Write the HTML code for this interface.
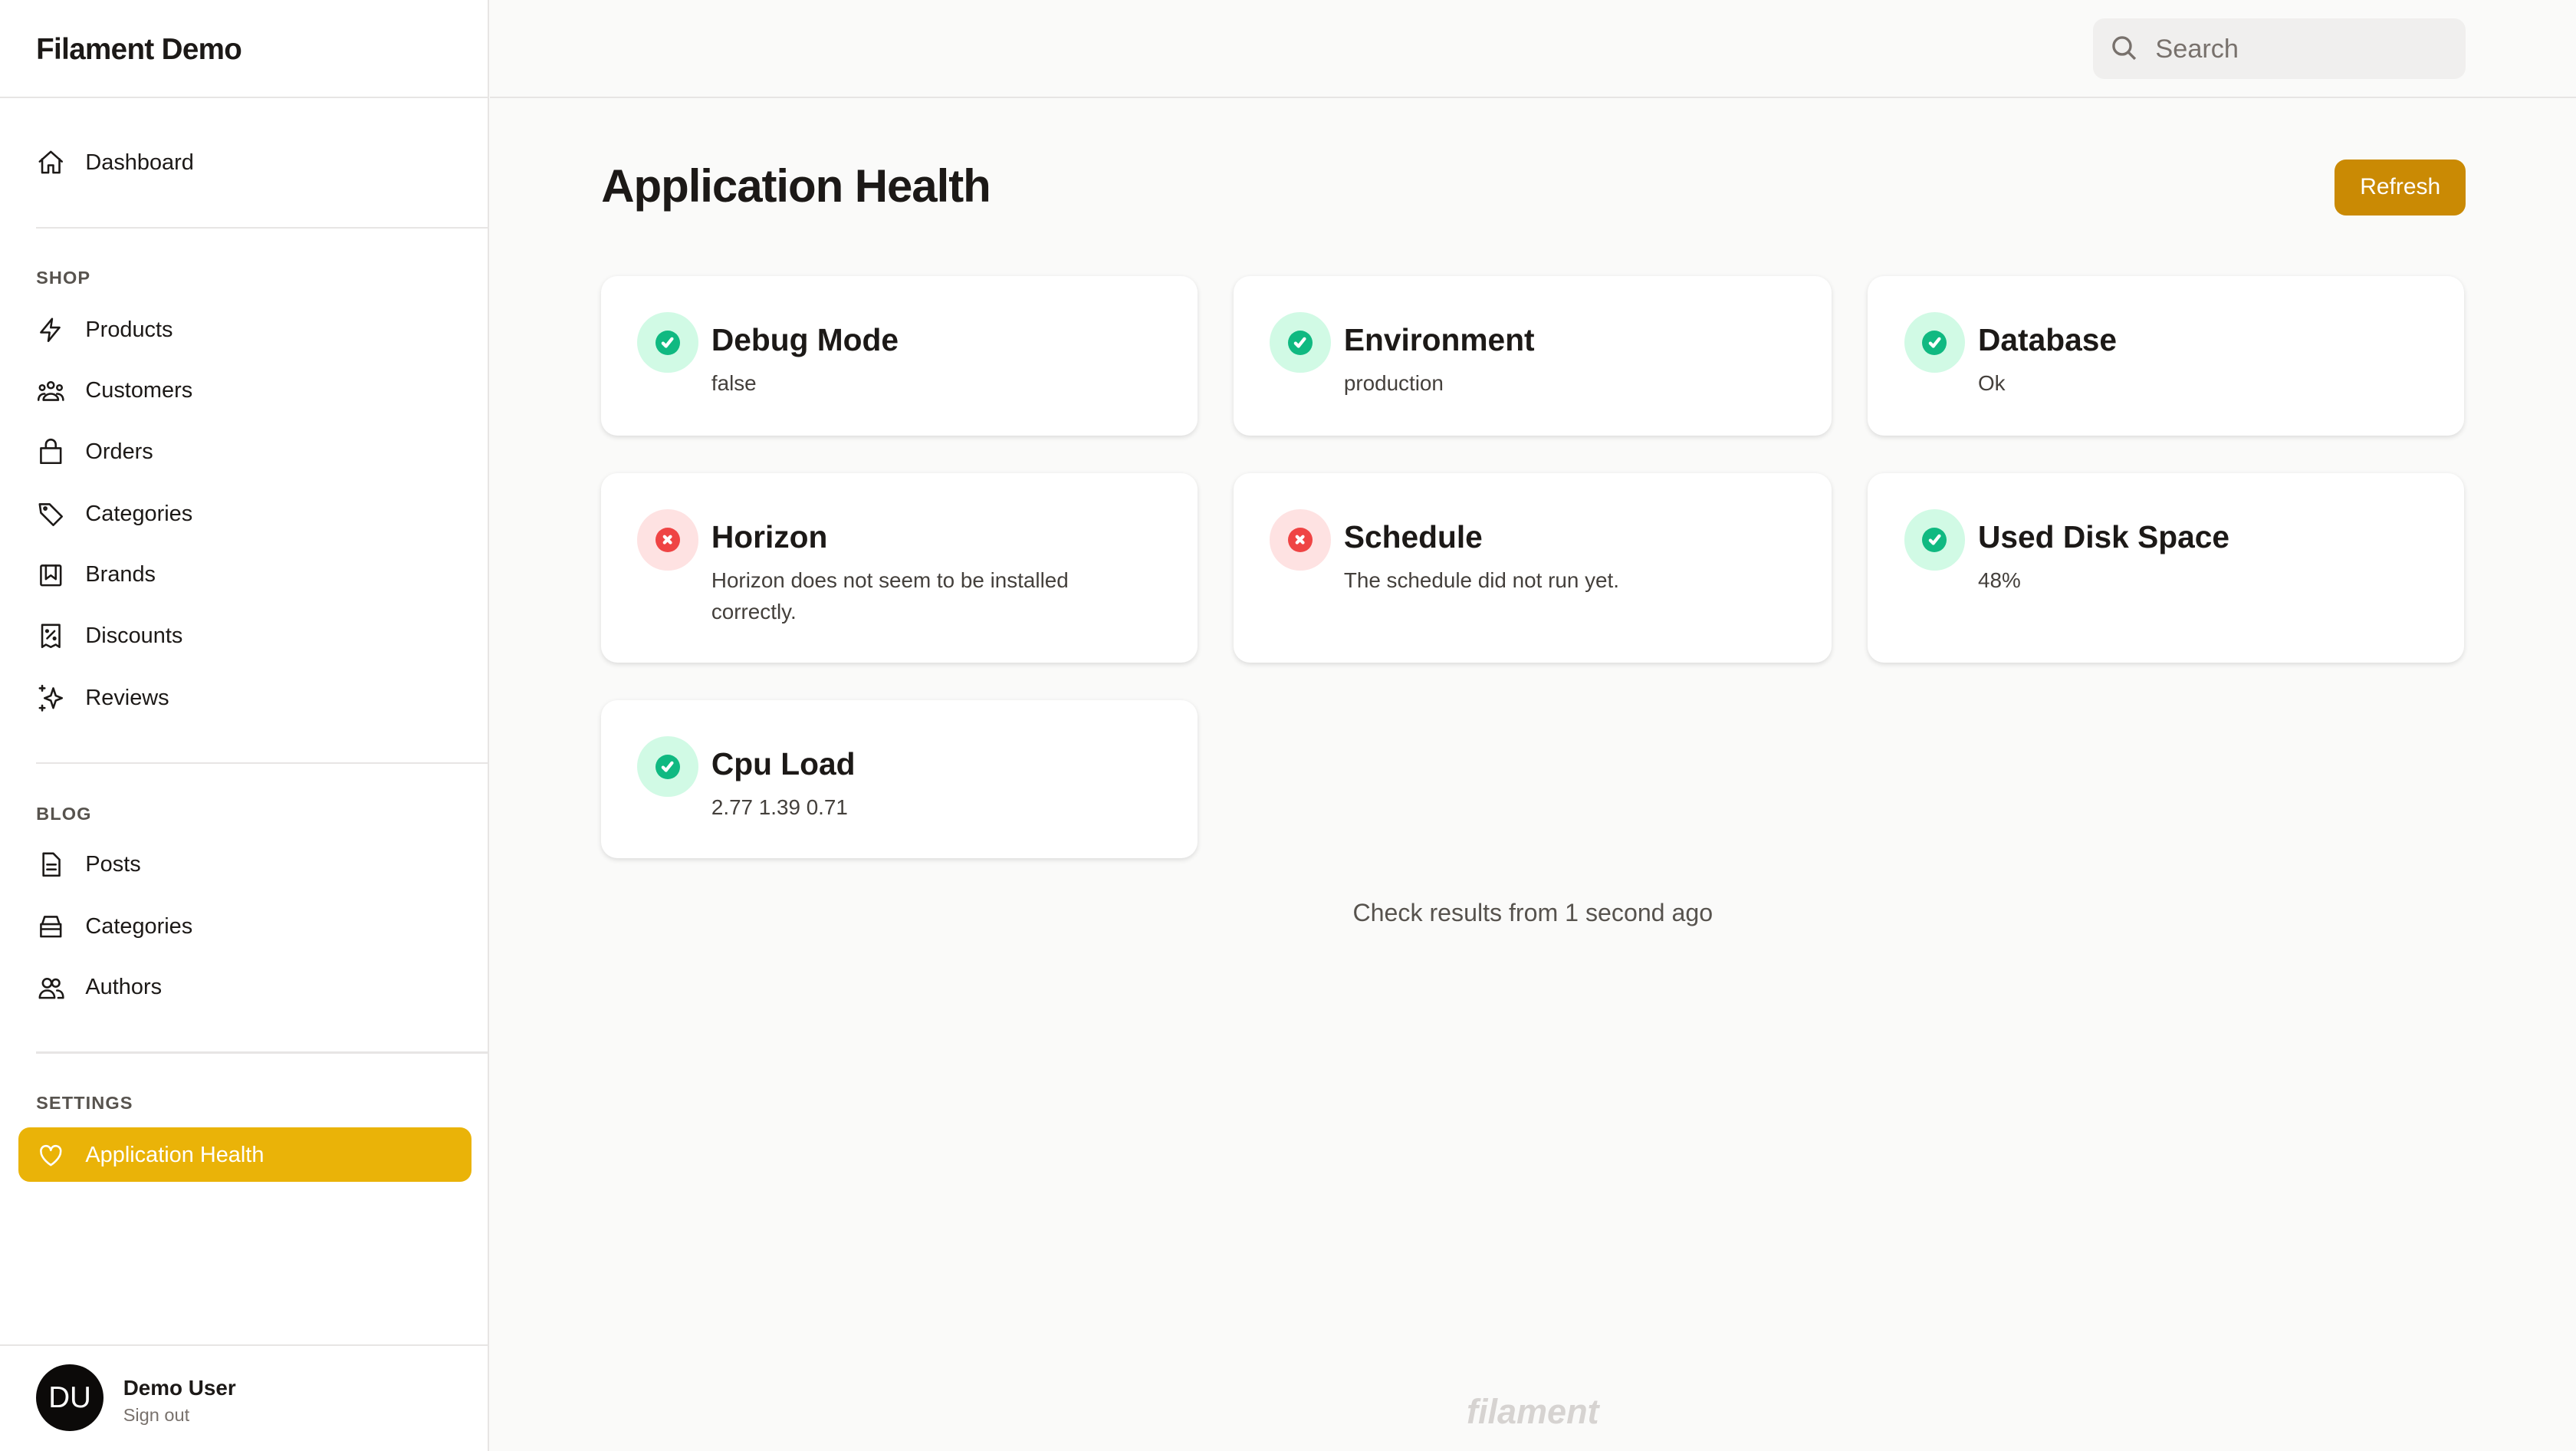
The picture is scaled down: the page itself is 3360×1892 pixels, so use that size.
<!DOCTYPE html>
<html><head><meta charset="utf-8"><style>
html,body{margin:0;padding:0;}
body{width:1568px;height:883px;zoom:2.142857;background:#fafaf9;font-family:"Liberation Sans",sans-serif;color:#1c1917;overflow:hidden;position:relative;}
.side{position:absolute;left:0;top:0;width:297px;height:883px;background:#fff;border-right:1px solid #e7e5e4;}
.brand{height:59px;border-bottom:1px solid #e7e5e4;font-size:18px;font-weight:bold;line-height:61px;padding-left:22px;letter-spacing:-0.3px;}
.item{position:absolute;left:22px;font-size:13.5px;display:flex;align-items:center;height:20px;}
.item svg{width:18px;height:18px;margin-right:12px;fill:none;stroke:#1c1917;stroke-width:1.6;stroke-linecap:round;stroke-linejoin:round;}
.grp{position:absolute;left:22px;font-size:11px;font-weight:bold;color:#57534e;letter-spacing:0.5px;}
.hr{position:absolute;left:22px;right:0;height:1px;background:#e7e5e4;}
.active{position:absolute;left:11px;top:686px;width:276px;height:33px;background:#eab308;border-radius:7px;}
.top{position:absolute;left:298px;right:0;top:0;height:59px;border-bottom:1px solid #e7e5e4;}
.search{position:absolute;left:1274px;top:11px;width:227px;height:37px;background:#f0efee;border-radius:7px;}
h1{position:absolute;left:366px;top:97px;margin:0;font-size:28px;font-weight:bold;letter-spacing:-0.5px;}
.btn{position:absolute;left:1421px;top:97px;width:80px;height:34px;background:#ca8a04;border-radius:7px;color:#fff;font-size:14px;text-align:center;line-height:34px;}
.card{position:absolute;background:#fff;border-radius:10px;box-shadow:0 1px 3px rgba(0,0,0,.12);width:363px;}
.ic{position:absolute;left:22px;top:22px;width:37px;height:37px;border-radius:50%;}
.ic.g{background:#d1fae5}.ic.r{background:#fee2e2}
.ic i{position:absolute;left:11px;top:11px;width:15px;height:15px;border-radius:50%;}
.g i{background:#10b981}.r i{background:#ef4444}
.ic svg{position:absolute;left:14px;top:14px;width:9px;height:9px;stroke:#fff;stroke-width:2.2;fill:none;stroke-linecap:round;stroke-linejoin:round;}
.t{position:absolute;left:67px;top:28px;font-size:19px;font-weight:bold;}
.d{position:absolute;left:67px;top:56px;font-size:13px;color:#44403c;line-height:19px;width:270px;}
</style></head><body>
<div class="side">
<div class="brand">Filament Demo</div>
<div class="item" style="top:89px"><svg viewBox="0 0 24 24"><path d="M3 11l9-8 9 8M5 9v11h5v-6h4v6h5V9"/></svg>Dashboard</div>
<div class="hr" style="top:138px"></div>
<div class="grp" style="top:163px">SHOP</div>
<div class="item" style="top:191px"><svg viewBox="0 0 24 24"><path d="M13 3L4 14h7l-1 7 9-11h-7z"/></svg>Products</div>
<div class="item" style="top:228px"><svg viewBox="0 0 24 24"><circle cx="12" cy="7" r="2.5"/><circle cx="5" cy="9" r="2"/><circle cx="19" cy="9" r="2"/><path d="M2 19c0-3 2-5 5-5M22 19c0-3-2-5-5-5M6 19c0-3 3-5 6-5s6 2 6 5z"/></svg>Customers</div>
<div class="item" style="top:265px"><svg viewBox="0 0 24 24"><path d="M8 9V6a4 4 0 018 0v3M4 9h16v12H4z"/></svg>Orders</div>
<div class="item" style="top:303px"><svg viewBox="0 0 24 24"><path d="M3 4h8l10 10-7 7L4 11z"/><circle cx="7.5" cy="7.5" r="1"/></svg>Categories</div>
<div class="item" style="top:340px"><svg viewBox="0 0 24 24"><rect x="4" y="4" width="16" height="16" rx="1"/><path d="M8 4v11l4-3 4 3V4"/></svg>Brands</div>
<div class="item" style="top:377px"><svg viewBox="0 0 24 24"><path d="M5 3h14v18l-3-2-4 2-4-2-3 2zM9 14l6-6"/><circle cx="9" cy="8" r=".8"/><circle cx="15" cy="14" r=".8"/></svg>Discounts</div>
<div class="item" style="top:415px"><svg viewBox="0 0 24 24"><path d="M14 4l2 6 5 2-5 2-2 6-2-6-5-2 5-2zM5 2v4M3 4h4M5 18v4M3 20h4"/></svg>Reviews</div>
<div class="hr" style="top:464px"></div>
<div class="grp" style="top:489px">BLOG</div>
<div class="item" style="top:516px"><svg viewBox="0 0 24 24"><path d="M6 3h8l5 5v13H6zM9 12h7M9 16h7"/></svg>Posts</div>
<div class="item" style="top:554px"><svg viewBox="0 0 24 24"><path d="M7 4h10l2 6H5zM4 10h16v10H4zM4 14h16"/></svg>Categories</div>
<div class="item" style="top:591px"><svg viewBox="0 0 24 24"><circle cx="9" cy="8" r="3.5"/><circle cx="16" cy="8" r="3"/><path d="M3 20c0-4 3-6 6-6s6 2 6 6zM17 14c3 0 5 2 5 6h-4"/></svg>Authors</div>
<div class="hr" style="top:640px"></div>
<div class="grp" style="top:665px">SETTINGS</div>
<div class="active"></div>
<div class="item" style="top:693px;color:#fff"><svg viewBox="0 0 24 24" style="stroke:#fff"><path d="M12 20s-8-5-8-11a4 4 0 018-1 4 4 0 018 1c0 6-8 11-8 11z"/></svg>Application Health</div>
<div class="hr" style="top:818px;left:0"></div>
<div style="position:absolute;left:22px;top:830px;width:41px;height:41px;border-radius:50%;background:#0c0a09;color:#fff;font-size:18px;text-align:center;line-height:41px">DU</div>
<div style="position:absolute;left:75px;top:837px;font-size:13px;font-weight:bold">Demo User</div>
<div style="position:absolute;left:75px;top:855px;font-size:11px;color:#78716c">Sign out</div>
</div>
<div class="top"></div>
<div class="search"><svg viewBox="0 0 24 24" style="position:absolute;left:10px;top:9px;width:19px;height:19px;fill:none;stroke:#78716c;stroke-width:2"><circle cx="10" cy="10" r="6.5"/><path d="M15 15l5 5"/></svg><span style="position:absolute;left:38px;top:10px;font-size:16px;color:#78716c">Search</span></div>
<h1>Application Health</h1>
<div class="btn">Refresh</div>

<div class="card" style="left:366px;top:168px;height:97px"><div class="ic g"><i></i><svg viewBox="0 0 10 10"><path d="M2 5.5l2 2 4-5"/></svg></div><div class="t">Debug Mode</div><div class="d">false</div></div>
<div class="card" style="left:751px;top:168px;height:97px;width:364px"><div class="ic g"><i></i><svg viewBox="0 0 10 10"><path d="M2 5.5l2 2 4-5"/></svg></div><div class="t">Environment</div><div class="d">production</div></div>
<div class="card" style="left:1137px;top:168px;height:97px"><div class="ic g"><i></i><svg viewBox="0 0 10 10"><path d="M2 5.5l2 2 4-5"/></svg></div><div class="t">Database</div><div class="d">Ok</div></div>

<div class="card" style="left:366px;top:288px;height:115px"><div class="ic r"><i></i><svg viewBox="0 0 10 10"><path d="M3 3l4 4M7 3l-4 4"/></svg></div><div class="t">Horizon</div><div class="d">Horizon does not seem to be installed correctly.</div></div>
<div class="card" style="left:751px;top:288px;height:115px;width:364px"><div class="ic r"><i></i><svg viewBox="0 0 10 10"><path d="M3 3l4 4M7 3l-4 4"/></svg></div><div class="t">Schedule</div><div class="d">The schedule did not run yet.</div></div>
<div class="card" style="left:1137px;top:288px;height:115px"><div class="ic g"><i></i><svg viewBox="0 0 10 10"><path d="M2 5.5l2 2 4-5"/></svg></div><div class="t">Used Disk Space</div><div class="d">48%</div></div>

<div class="card" style="left:366px;top:426px;height:96px"><div class="ic g"><i></i><svg viewBox="0 0 10 10"><path d="M2 5.5l2 2 4-5"/></svg></div><div class="t">Cpu Load</div><div class="d">2.77 1.39 0.71</div></div>

<div style="position:absolute;left:751px;width:364px;top:547px;text-align:center;font-size:15px;color:#57534e">Check results from 1 second ago</div>
<div style="position:absolute;left:751px;width:364px;top:847px;text-align:center;font-size:21px;font-weight:bold;font-style:italic;color:#d6d3d1">filament</div>
</body></html>
